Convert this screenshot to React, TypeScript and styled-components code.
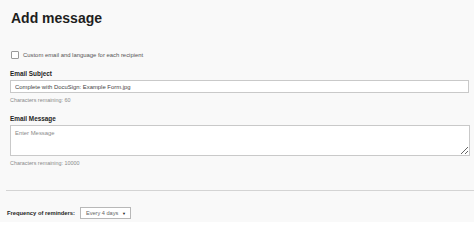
import React, { useState } from 'react';
import styled, { createGlobalStyle } from 'styled-components';

const GlobalStyle = createGlobalStyle`
  html, body {
    margin: 0;
    padding: 0;
    background: #ffffff;
  }
  body {
    font-family: 'Liberation Sans', Arial, sans-serif;
    color: #1e1e1e;
  }
  * {
    box-sizing: border-box;
  }
`;

const Page = styled.div`
  background: #f9f9f9;
  height: 222px;
  padding: 9px 4px 0 10px;
  display: flex;
  flex-direction: column;
`;

const Title = styled.h1`
  margin: 0;
  font-size: 14px;
  font-weight: 700;
  line-height: 18px;
  color: #1e1e1e;
  padding-left: 1px;
`;

const CheckRow = styled.label`
  display: flex;
  align-items: center;
  gap: 4px;
  margin-top: 24px;
  padding-left: 1px;
  font-size: 5.9px;
  color: #555;
  cursor: pointer;
`;

const Box = styled.span`
  width: 8px;
  height: 8px;
  border: 1px solid #9a9a9a;
  background: #fff;
  border-radius: 1px;
`;

const Field = styled.div<{ $top: number }>`
  display: flex;
  flex-direction: column;
  margin-top: ${(p) => p.$top}px;
`;

const Label = styled.div`
  font-size: 6.4px;
  font-weight: 700;
  color: #1e1e1e;
  line-height: 8px;
  margin-bottom: 2px;
`;

const TextInput = styled.input`
  height: 13px;
  width: 459px;
  border: 1px solid #c9c9c9;
  background: #fff;
  padding: 0 4px;
  font-family: 'Liberation Sans', Arial, sans-serif;
  font-size: 5.9px;
  color: #444;
  outline: none;
`;

const TextArea = styled.textarea`
  height: 31px;
  width: 460px;
  border: 1px solid #c9c9c9;
  background: #fff;
  padding: 4px 4px;
  font-family: 'Liberation Sans', Arial, sans-serif;
  font-size: 5.9px;
  color: #444;
  resize: vertical;
  outline: none;
  &::placeholder {
    color: #8a8a8a;
  }
`;

const Hint = styled.div`
  font-size: 5.4px;
  color: #8a8a8a;
  line-height: 7px;
  margin-top: 4px;
`;

const Divider = styled.hr`
  margin: 23px -4px 0 -4px;
  border: none;
  border-top: 1px solid #d4d4d4;
`;

const ReminderRow = styled.div`
  display: flex;
  align-items: center;
  gap: 5px;
  margin-top: 16px;
  margin-left: -3px;
`;

const ReminderLabel = styled.span`
  font-size: 5.8px;
  font-weight: 700;
  color: #1e1e1e;
`;

const Select = styled.button`
  display: flex;
  align-items: center;
  justify-content: space-between;
  height: 12px;
  width: 51px;
  padding: 0 4px 0 5px;
  border: 1px solid #b8b8b8;
  background: #fff;
  font-family: 'Liberation Sans', Arial, sans-serif;
  font-size: 5.6px;
  color: #666;
  white-space: nowrap;
  cursor: pointer;
`;

const Caret = styled.span`
  font-size: 4px;
  color: #222;
`;

export default function App() {
  const [subject, setSubject] = useState('Complete with DocuSign: Example Form.jpg');
  const [message, setMessage] = useState('');

  return (
    <>
      <GlobalStyle />
      <Page>
        <Title>Add message</Title>
        <CheckRow>
          <Box />
          Custom email and language for each recipient
        </CheckRow>

        <Field $top={11}>
          <Label>Email Subject</Label>
          <TextInput value={subject} onChange={(e) => setSubject(e.target.value)} />
          <Hint>Characters remaining: {Math.max(0, 100 - subject.length)}</Hint>
        </Field>

        <Field $top={11}>
          <Label>Email Message</Label>
          <TextArea
            placeholder="Enter Message"
            value={message}
            onChange={(e) => setMessage(e.target.value)}
          />
          <Hint>Characters remaining: {10000 - message.length}</Hint>
        </Field>

        <Divider />

        <ReminderRow>
          <ReminderLabel>Frequency of reminders:</ReminderLabel>
          <Select type="button">
            <span>Every 4 days</span>
            <Caret>▼</Caret>
          </Select>
        </ReminderRow>
      </Page>
    </>
  );
}
